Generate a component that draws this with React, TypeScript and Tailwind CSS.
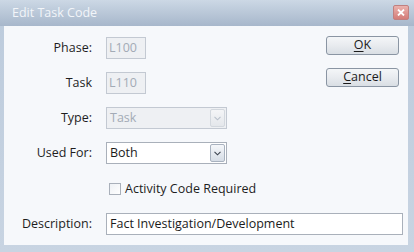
import React from "react";

function Chevron({ dim }: { dim?: boolean }) {
  return (
    <svg width="7" height="5" viewBox="0 0 7 5" className="block">
      <path d="M0.5 0.8 L3.5 3.8 L6.5 0.8" fill="none" stroke={dim ? "#b8c0cb" : "#3c4450"} strokeWidth="1.1" />
    </svg>
  );
}

function Select({ value, disabled }: { value: string; disabled?: boolean }) {
  return (
    <div
      className={
        "relative w-[121px] h-[22px] border flex items-center pl-[3px] " +
        (disabled ? "bg-[#eef0f3] border-[#c3c9d2] text-[#a3abb6]" : "bg-white border-[#a9b0ba] text-[#1b1b1b]")
      }
    >
      <span>{value}</span>
      <div
        className={
          "absolute right-[1px] top-[1px] bottom-[1px] w-[15px] rounded-[2px] border flex items-center justify-center " +
          (disabled
            ? "border-[#d3d8de] bg-gradient-to-b from-[#f4f5f7] to-[#e4e7eb]"
            : "border-[#a8b2bf] bg-gradient-to-b from-[#f5f7fa] to-[#d6dde6]")
        }
      >
        <Chevron dim={disabled} />
      </div>
    </div>
  );
}

function Row({ label, children }: { label: string; children: React.ReactNode }) {
  return (
    <div className="flex items-center h-[22px]">
      <div className="w-[88px] text-right text-[#1e1e1e]">{label}</div>
      <div className="ml-[14px]">{children}</div>
    </div>
  );
}

function Btn({ children }: { children: React.ReactNode }) {
  return (
    <button className="w-[73px] h-[19px] rounded-[3px] border border-[#8a95a3] bg-gradient-to-b from-[#f4f6f8] via-[#e8ebef] to-[#d9dee4] text-[#1b1b1b] flex items-center justify-center leading-none">
      {children}
    </button>
  );
}

export default function App() {
  return (
    <div
      className="w-[414px] h-[252px] flex flex-col bg-gradient-to-b from-[#bccbdc] to-[#c8d4e2] text-[12.5px] overflow-hidden"
      style={{ fontFamily: '"Open Sans", "Noto Sans", sans-serif' }}
    >
      <div className="h-[26px] flex items-center justify-between pl-[12px] pr-[5px] bg-gradient-to-b from-[#ccd8e5] to-[#a7b7cb]">
        <span className="text-[12.5px] text-[#f2f5f9]">Edit Task Code</span>
        <div className="w-[16px] h-[15px] mb-[2px] rounded-[2px] border border-[#c08080] bg-gradient-to-b from-[#eab2ae] to-[#d47c78] flex items-center justify-center">
          <svg width="8" height="7" viewBox="0 0 8 7">
            <path d="M1 0.5 L7 6.5 M7 0.5 L1 6.5" stroke="#ffffff" strokeWidth="1.8" />
          </svg>
        </div>
      </div>
      <div className="flex-1 ml-[4px] mr-[6px] mb-[7px] bg-[#f6f8fb] flex flex-col pt-[11px]">
        <div className="flex justify-between">
          <div className="flex flex-col gap-[13px]">
            <Row label="Phase:">
              <div className="w-[40px] h-[22px] border border-[#c3c9d2] bg-[#eef0f3] text-[#a3abb6] flex items-center pl-[2px]">
                L100
              </div>
            </Row>
            <Row label="Task">
              <div className="w-[40px] h-[22px] border border-[#c3c9d2] bg-[#eef0f3] text-[#a3abb6] flex items-center pl-[2px]">
                L110
              </div>
            </Row>
            <Row label="Type:">
              <Select value="Task" disabled />
            </Row>
            <Row label="Used For:">
              <Select value="Both" />
            </Row>
          </div>
          <div className="flex flex-col gap-[13px] mr-[9px] -mt-[1px]">
            <Btn>
              <span className="underline underline-offset-2">O</span>K
            </Btn>
            <Btn>
              <span className="underline underline-offset-2">C</span>ancel
            </Btn>
          </div>
        </div>
        <div className="flex items-center mt-[18px] ml-[105px] h-[14px]">
          <div className="w-[12px] h-[12px] border border-[#a9b0ba] bg-gradient-to-br from-[#eef1f5] to-[#ffffff]" />
          <span className="ml-[4px] text-[#1e1e1e]">Activity Code Required</span>
        </div>
        <div className="mt-[17px] flex items-center h-[22px]">
          <div className="w-[88px] text-right text-[#1e1e1e]">Description:</div>
          <div className="ml-[14px] w-[297px] h-[22px] border border-[#a9b0ba] bg-white flex items-center pl-[3px] text-[#1b1b1b]">
            Fact Investigation/Development
          </div>
        </div>
      </div>
    </div>
  );
}
